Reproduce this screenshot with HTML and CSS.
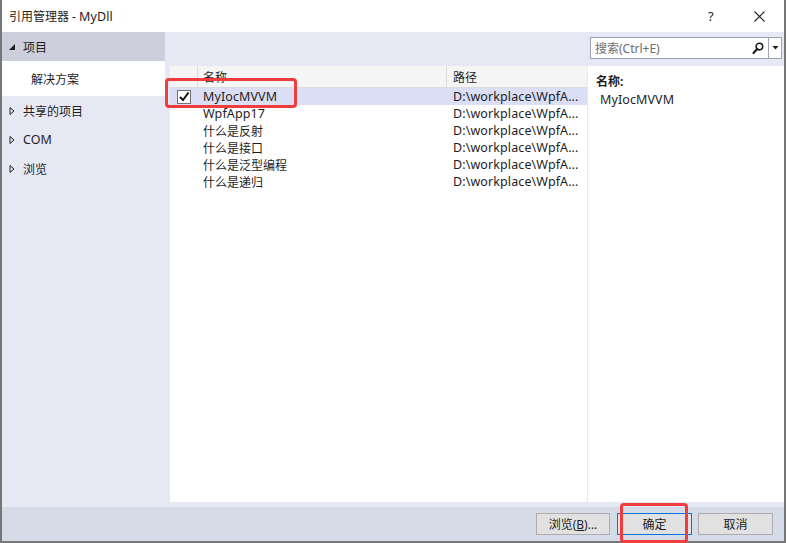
FILE: index.html
```html
<!DOCTYPE html>
<html lang="zh">
<head>
<meta charset="utf-8">
<title>引用管理器 - MyDll</title>
<link rel="stylesheet" href="styles.css">
</head>
<body>
<div class="window">
  <div class="titlebar">
    <span class="title">引用管理器 - <span class="en">MyDll</span></span>
    <span class="help">?</span>
    <span class="close"><svg width="11" height="11" viewBox="0 0 11 11"><path d="M0.5 0.5 L10.5 10.5 M10.5 0.5 L0.5 10.5" stroke="#1e1e1e" stroke-width="1.1" fill="none"/></svg></span>
  </div>
  <div class="body">
    <div class="sidebar">
      <div class="nav-item selected"><svg class="tri" width="8" height="8" viewBox="0 0 8 8"><path d="M7 1 L7 7 L1 7 Z" fill="#1e1e1e"/></svg><span>项目</span></div>
      <div class="nav-sub">解决方案</div>
      <div class="nav-item"><svg class="tri" width="8" height="10" viewBox="0 0 8 10"><path d="M2 1.5 L6 5 L2 8.5 Z" fill="none" stroke="#1e1e1e" stroke-width="1"/></svg><span>共享的项目</span></div>
      <div class="nav-item"><svg class="tri" width="8" height="10" viewBox="0 0 8 10"><path d="M2 1.5 L6 5 L2 8.5 Z" fill="none" stroke="#1e1e1e" stroke-width="1"/></svg><span class="en">COM</span></div>
      <div class="nav-item"><svg class="tri" width="8" height="10" viewBox="0 0 8 10"><path d="M2 1.5 L6 5 L2 8.5 Z" fill="none" stroke="#1e1e1e" stroke-width="1"/></svg><span>浏览</span></div>
    </div>
    <div class="main">
      <div class="toolbar">
        <div class="search">
          <span class="placeholder">搜索(Ctrl+E)</span>
          <svg class="mag" width="12" height="13" viewBox="0 0 12 13"><circle cx="7.4" cy="4.6" r="3.3" fill="none" stroke="#1e1e1e" stroke-width="1.6"/><path d="M5.2 7 L1.5 11" stroke="#1e1e1e" stroke-width="2.2" stroke-linecap="round"/></svg>
          <span class="drop"><svg width="7" height="4" viewBox="0 0 7 4"><path d="M0.5 0 L6.5 0 L3.5 3.5 Z" fill="#1e1e1e"/></svg></span>
        </div>
      </div>
      <div class="panes">
        <div class="list">
          <div class="row header">
            <div class="c-check"></div>
            <div class="c-name">名称</div>
            <div class="c-path">路径</div>
          </div>
          <div class="row sel">
            <div class="c-check"><svg width="14" height="14" viewBox="0 0 14 14"><rect x="0.5" y="0.5" width="13" height="13" fill="#fff" stroke="#707070"/><path d="M3 7 L6 10 L11.5 2.5" fill="none" stroke="#111" stroke-width="2"/></svg></div>
            <div class="c-name en">MyIocMVVM</div>
            <div class="c-path en">D:\workplace\WpfA...</div>
          </div>
          <div class="row"><div class="c-check"></div><div class="c-name en">WpfApp17</div><div class="c-path en">D:\workplace\WpfA...</div></div>
          <div class="row"><div class="c-check"></div><div class="c-name">什么是反射</div><div class="c-path en">D:\workplace\WpfA...</div></div>
          <div class="row"><div class="c-check"></div><div class="c-name">什么是接口</div><div class="c-path en">D:\workplace\WpfA...</div></div>
          <div class="row"><div class="c-check"></div><div class="c-name">什么是泛型编程</div><div class="c-path en">D:\workplace\WpfA...</div></div>
          <div class="row"><div class="c-check"></div><div class="c-name">什么是递归</div><div class="c-path en">D:\workplace\WpfA...</div></div>
        </div>
        <div class="detail">
          <div class="d-label">名称:</div>
          <div class="d-value en">MyIocMVVM</div>
        </div>
      </div>
    </div>
  </div>
  <div class="footer">
    <button class="btn first">浏览(<u>B</u>)...</button>
    <button class="btn focus">确定</button>
    <button class="btn">取消</button>
  </div>
  <div class="mark mark-row"></div>
  <div class="mark mark-ok"></div>
</div>
</body>
</html>
```
FILE: styles.css
```css
* { box-sizing: border-box; }
html, body { margin: 0; padding: 0; }
body {
  width: 786px;
  height: 543px;
  overflow: hidden;
  font-family: "Noto Sans", "Noto Sans CJK SC", sans-serif;
  font-size: 12px;
  color: #1e1e1e;
  background: #fff;
}
.en { font-size: 12.5px; letter-spacing: 0.1px; }
.window {
  position: relative;
  width: 786px;
  height: 543px;
  border-left: 2px solid #767676;
  border-right: 2px solid #767676;
  border-bottom: 2px solid #767676;
  display: flex;
  flex-direction: column;
  background: #e6e9f4;
}
.titlebar {
  height: 32px;
  background: #fff;
  display: flex;
  align-items: center;
  padding-left: 7px;
}
.title { flex: 1; font-size: 12px; }
.help { width: 10px; font-size: 13px; margin-right: 36px; }
.close { width: 11px; height: 11px; margin-right: 19px; display: flex; }
.body {
  flex: 1;
  display: flex;
  min-height: 0;
}
.sidebar {
  width: 163px;
  display: flex;
  flex-direction: column;
}
.nav-item {
  height: 29px;
  display: flex;
  align-items: center;
  padding-left: 6px;
}
.nav-item .tri { margin-right: 7px; }
.nav-item.selected { background: #cccedb; }
.nav-sub {
  height: 35px;
  background: #fff;
  display: flex;
  align-items: center;
  padding-left: 29px;
}
.main {
  flex: 1;
  display: flex;
  flex-direction: column;
  padding: 0 0 5px 5px;
}
.toolbar {
  height: 34px;
  display: flex;
  justify-content: flex-end;
  align-items: flex-start;
  padding: 5px 2px 0 0;
}
.search {
  width: 192px;
  height: 22px;
  background: #fff;
  border: 1px solid #9ea3b3;
  display: flex;
  align-items: center;
}
.placeholder { flex: 1; color: #6d6d6d; padding-left: 4px; }
.mag { margin-right: 4px; }
.drop {
  width: 13px;
  height: 20px;
  border-left: 1px solid #9ea3b3;
  display: flex;
  align-items: center;
  justify-content: center;
}
.panes {
  flex: 1;
  display: flex;
  gap: 1px;
}
.list {
  width: 417px;
  background: #fff;
}
.row {
  display: flex;
  height: 17px;
  align-items: center;
  white-space: nowrap;
}
.row.header {
  height: 22px;
  background: #f5f5f5;
  border-bottom: 1px solid #dcdcdc;
}
.row.header .c-check, .row.header .c-name { border-right: 1px solid #dcdcdc; height: 100%; }
.row.header > div { display: flex; align-items: center; }
.row.sel { background: #dadff6; }
.c-check { width: 28px; display: flex; align-items: center; padding-left: 7px; }
.c-name { width: 249px; padding-left: 5px; overflow: hidden; }
.c-path { flex: 1; padding-left: 6px; overflow: hidden; }
.detail {
  flex: 1;
  background: #fff;
  padding: 7px 0 0 8px;
}
.d-label { font-weight: bold; line-height: 17px; }
.d-value { padding-left: 4px; line-height: 17px; margin-top: 1px; }
.footer {
  height: 34px;
  background: #d6dbe8;
  display: flex;
  justify-content: flex-end;
  align-items: center;
  padding-right: 11px;
  gap: 6px;
}
.btn {
  width: 75px;
  height: 22px;
  background: #e1e1e1;
  border: 1px solid #adadad;
  font-family: "Noto Sans", "Noto Sans CJK SC", sans-serif;
  font-size: 12px;
  color: #1e1e1e;
  padding: 0;
  margin: 0;
}
.btn.first { width: 74px; margin-right: 1px; }
.btn.focus { border-color: #0078d7; }
.mark {
  position: absolute;
  border: 3px solid #f03c3c;
  border-radius: 4px;
}
.mark-row { left: 163px; top: 78px; width: 132px; height: 30px; }
.mark-ok { left: 618px; top: 503px; width: 68px; height: 40px; }
```
